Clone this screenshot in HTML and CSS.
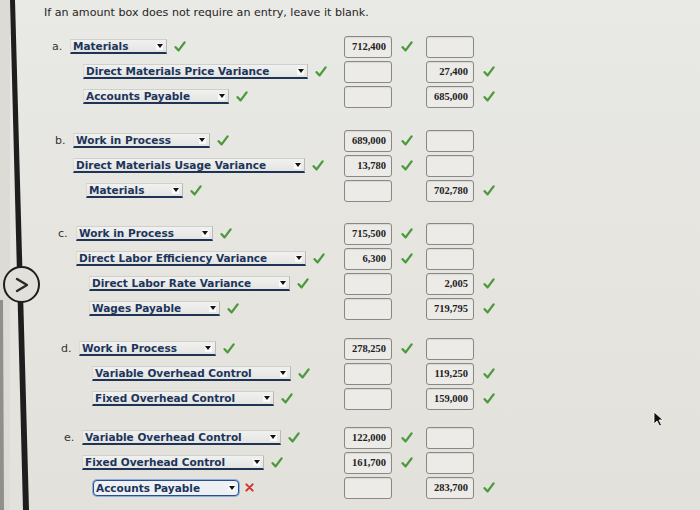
FILE: index.html
```html
<!DOCTYPE html>
<html>
<head>
<meta charset="utf-8">
<link rel="stylesheet" href="styles.css">
</head>
<body>
<svg class="defs" width="0" height="0" aria-hidden="true">
  <symbol id="ck" viewBox="0 0 12 11"><path d="M1.6 6.2 L4.6 9.4 L10.6 1.4" fill="none" stroke="#4c9a3b" stroke-width="2.3" stroke-linecap="round" stroke-linejoin="round"/></symbol>
  <symbol id="xx" viewBox="0 0 10 10"><path d="M1.5 1.5 L8.5 8.5 M8.5 1.5 L1.5 8.5" fill="none" stroke="#d8302a" stroke-width="2.2" stroke-linecap="round"/></symbol>
</svg>
<div class="screen">
  <svg class="bezel" width="40" height="510" viewBox="0 0 40 510" aria-hidden="true">
    <polygon points="0,0 10,0 10,510 0,510" fill="#dcdbd6"/>
    <polygon points="10,0 15,0 29,510 23,510" fill="#1e1e1e"/>
    <polygon points="0,300 3,300 4,510 0,510" fill="#8f8f8b"/>
  </svg>
  <div class="nav-btn">
    <svg width="20" height="20" viewBox="0 0 20 20"><path d="M5 4 L15 10 L5 16" fill="none" stroke="#2a2a2a" stroke-width="2.4" stroke-linecap="round" stroke-linejoin="round"/></svg>
  </div>
  <svg class="cursor" width="12" height="16" viewBox="0 0 12 16" aria-hidden="true">
    <path d="M1 1 L1 13 L4 10 L6.5 15 L8.5 14 L6 9 L10 9 Z" fill="#111" stroke="#fff" stroke-width="0.8"/>
  </svg>

  <main class="content">
    <p class="instr">If an amount box does not require an entry, leave it blank.</p>

    <section class="group g-a">
      <div class="row">
        <div class="acct"><span class="lbl">a.</span><span class="sel"><span>Materials</span><i class="arr"></i></span><svg class="ck"><use href="#ck"/></svg></div>
        <div class="amt"><span class="box">712,400</span><svg class="ck"><use href="#ck"/></svg></div>
        <div class="amt"><span class="box"></span></div>
      </div>
      <div class="row">
        <div class="acct ind"><span class="sel"><span>Direct Materials Price Variance</span><i class="arr"></i></span><svg class="ck"><use href="#ck"/></svg></div>
        <div class="amt"><span class="box"></span></div>
        <div class="amt"><span class="box">27,400</span><svg class="ck"><use href="#ck"/></svg></div>
      </div>
      <div class="row">
        <div class="acct ind"><span class="sel"><span>Accounts Payable</span><i class="arr"></i></span><svg class="ck"><use href="#ck"/></svg></div>
        <div class="amt"><span class="box"></span></div>
        <div class="amt"><span class="box">685,000</span><svg class="ck"><use href="#ck"/></svg></div>
      </div>
    </section>

    <section class="group g-b">
      <div class="row">
        <div class="acct"><span class="lbl">b.</span><span class="sel"><span>Work in Process</span><i class="arr"></i></span><svg class="ck"><use href="#ck"/></svg></div>
        <div class="amt"><span class="box">689,000</span><svg class="ck"><use href="#ck"/></svg></div>
        <div class="amt"><span class="box"></span></div>
      </div>
      <div class="row">
        <div class="acct dr"><span class="sel"><span>Direct Materials Usage Variance</span><i class="arr"></i></span><svg class="ck"><use href="#ck"/></svg></div>
        <div class="amt"><span class="box">13,780</span><svg class="ck"><use href="#ck"/></svg></div>
        <div class="amt"><span class="box"></span></div>
      </div>
      <div class="row">
        <div class="acct ind"><span class="sel"><span>Materials</span><i class="arr"></i></span><svg class="ck"><use href="#ck"/></svg></div>
        <div class="amt"><span class="box"></span></div>
        <div class="amt"><span class="box">702,780</span><svg class="ck"><use href="#ck"/></svg></div>
      </div>
    </section>

    <section class="group g-c">
      <div class="row">
        <div class="acct"><span class="lbl">c.</span><span class="sel"><span>Work in Process</span><i class="arr"></i></span><svg class="ck"><use href="#ck"/></svg></div>
        <div class="amt"><span class="box">715,500</span><svg class="ck"><use href="#ck"/></svg></div>
        <div class="amt"><span class="box"></span></div>
      </div>
      <div class="row">
        <div class="acct dr"><span class="sel"><span>Direct Labor Efficiency Variance</span><i class="arr"></i></span><svg class="ck"><use href="#ck"/></svg></div>
        <div class="amt"><span class="box">6,300</span><svg class="ck"><use href="#ck"/></svg></div>
        <div class="amt"><span class="box"></span></div>
      </div>
      <div class="row">
        <div class="acct ind"><span class="sel"><span>Direct Labor Rate Variance</span><i class="arr"></i></span><svg class="ck"><use href="#ck"/></svg></div>
        <div class="amt"><span class="box"></span></div>
        <div class="amt"><span class="box">2,005</span><svg class="ck"><use href="#ck"/></svg></div>
      </div>
      <div class="row">
        <div class="acct ind"><span class="sel"><span>Wages Payable</span><i class="arr"></i></span><svg class="ck"><use href="#ck"/></svg></div>
        <div class="amt"><span class="box"></span></div>
        <div class="amt"><span class="box">719,795</span><svg class="ck"><use href="#ck"/></svg></div>
      </div>
    </section>

    <section class="group g-d">
      <div class="row">
        <div class="acct"><span class="lbl">d.</span><span class="sel"><span>Work in Process</span><i class="arr"></i></span><svg class="ck"><use href="#ck"/></svg></div>
        <div class="amt"><span class="box">278,250</span><svg class="ck"><use href="#ck"/></svg></div>
        <div class="amt"><span class="box"></span></div>
      </div>
      <div class="row">
        <div class="acct ind"><span class="sel"><span>Variable Overhead Control</span><i class="arr"></i></span><svg class="ck"><use href="#ck"/></svg></div>
        <div class="amt"><span class="box"></span></div>
        <div class="amt"><span class="box">119,250</span><svg class="ck"><use href="#ck"/></svg></div>
      </div>
      <div class="row">
        <div class="acct ind"><span class="sel"><span>Fixed Overhead Control</span><i class="arr"></i></span><svg class="ck"><use href="#ck"/></svg></div>
        <div class="amt"><span class="box"></span></div>
        <div class="amt"><span class="box">159,000</span><svg class="ck"><use href="#ck"/></svg></div>
      </div>
    </section>

    <section class="group g-e">
      <div class="row">
        <div class="acct"><span class="lbl">e.</span><span class="sel"><span>Variable Overhead Control</span><i class="arr"></i></span><svg class="ck"><use href="#ck"/></svg></div>
        <div class="amt"><span class="box">122,000</span><svg class="ck"><use href="#ck"/></svg></div>
        <div class="amt"><span class="box"></span></div>
      </div>
      <div class="row">
        <div class="acct dr"><span class="sel"><span>Fixed Overhead Control</span><i class="arr"></i></span><svg class="ck"><use href="#ck"/></svg></div>
        <div class="amt"><span class="box">161,700</span><svg class="ck"><use href="#ck"/></svg></div>
        <div class="amt"><span class="box"></span></div>
      </div>
      <div class="row">
        <div class="acct ind ind-e"><span class="sel focus"><span>Accounts Payable</span><i class="arr"></i></span><svg class="xx"><use href="#xx"/></svg></div>
        <div class="amt"><span class="box"></span></div>
        <div class="amt"><span class="box">283,700</span><svg class="ck"><use href="#ck"/></svg></div>
      </div>
    </section>
  </main>
</div>
</body>
</html>
```

FILE: styles.css
```css
* { box-sizing: border-box; }

html, body {
  margin: 0;
  padding: 0;
}

body {
  width: 700px;
  height: 510px;
  overflow: hidden;
  font-family: "DejaVu Sans", Verdana, sans-serif;
  background: linear-gradient(180deg, #e9e9e5 0%, #e5e4df 60%, #e2e1dc 100%);
}

.defs { position: absolute; }

.screen {
  position: relative;
  width: 700px;
  height: 510px;
}

.bezel {
  position: absolute;
  left: 0;
  top: 0;
}

.nav-btn {
  position: absolute;
  left: 3px;
  top: 266px;
  width: 37px;
  height: 37px;
  border: 2.5px solid #1e1e1e;
  border-radius: 50%;
  background: #e1e0db;
  display: flex;
  align-items: center;
  justify-content: center;
}

.cursor {
  position: absolute;
  left: 653px;
  top: 411px;
}

.content {
  padding: 6px 0 0 44px;
}

.instr {
  margin: 0;
  font-size: 11.1px;
  line-height: 14px;
  color: #262626;
}

.group { display: flex; flex-direction: column; }
.g-a { --pad: 8px;  margin-top: 14px; }
.g-b { --pad: 11px; margin-top: 19px; }
.g-c { --pad: 14px; margin-top: 18px; }
.g-d { --pad: 17px; margin-top: 15px; }
.g-e { --pad: 20px; margin-top: 14px; }

.row {
  display: grid;
  grid-template-columns: 300px 82px 82px;
  height: 25px;
  align-items: center;
}

.acct {
  display: flex;
  align-items: center;
  padding-left: var(--pad);
}
.acct.dr  { padding-left: calc(var(--pad) + 18px); }
.acct.ind { padding-left: calc(var(--pad) + 31px); }
.acct.ind-e { padding-left: calc(var(--pad) + 29px); }

.lbl {
  width: 18px;
  font-size: 11px;
  color: #333;
}

.sel {
  display: inline-flex;
  align-items: center;
  height: 15px;
  padding: 0 3px 0 2px;
  font-size: 10.5px;
  font-weight: bold;
  color: #1c355b;
  white-space: nowrap;
  background: linear-gradient(180deg, #f1f1ef 0%, #e4e4e2 100%);
  border-top: 1px solid #cfcfcc;
  border-left: 1px solid #dadad7;
  border-right: 1px solid #b9b9b6;
  border-bottom: 2px solid #1f3354;
}

.sel.focus {
  height: 16px;
  border: 1.5px solid #2a4f8c;
  border-radius: 4px;
  background: #eef0f3;
  box-shadow: 0 0 0 1px #8fb0de;
}

.arr {
  margin-left: 28px;
  width: 7px;
  height: 7px;
  background: #fafafa;
  display: flex;
  align-items: center;
  justify-content: center;
}
.arr::before {
  content: "";
  border-left: 3px solid transparent;
  border-right: 3px solid transparent;
  border-top: 4px solid #111;
}

.ck {
  width: 12px;
  height: 11px;
  margin-left: 7px;
  flex: none;
}

.xx {
  width: 9px;
  height: 9px;
  margin-left: 6px;
  flex: none;
}

.amt {
  display: flex;
  align-items: center;
}
.amt .ck { margin-left: 9px; }

.box {
  width: 48px;
  height: 22px;
  flex: none;
  border: 1.5px solid #888885;
  border-radius: 3px;
  background: #ecebe8;
  box-shadow: inset 0 1px 1px rgba(0,0,0,0.08);
  font-family: "Liberation Serif", "Times New Roman", serif;
  font-weight: bold;
  font-size: 10.5px;
  color: #222;
  text-align: right;
  padding-right: 5px;
  line-height: 19px;
}
```
